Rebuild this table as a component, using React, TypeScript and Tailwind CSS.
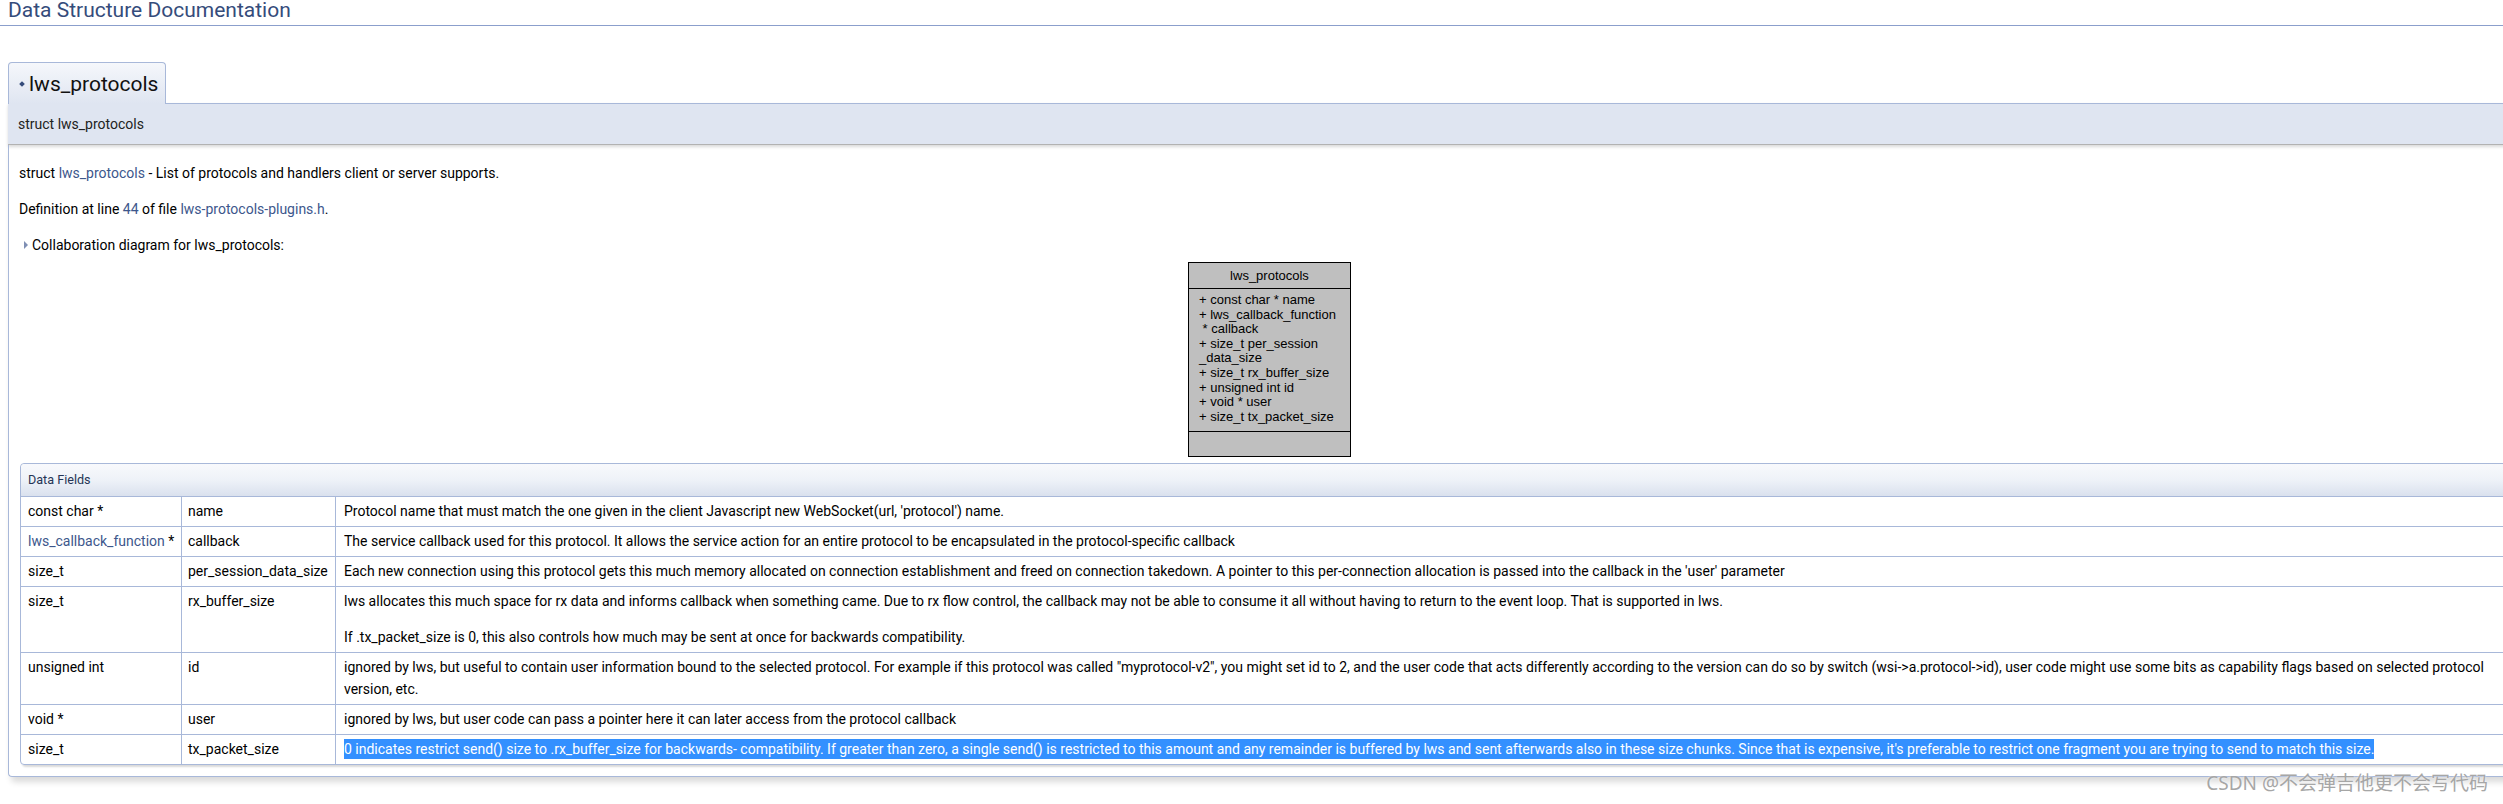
import React from "react";

const LINK = "text-[#3d578c]";

function Row({
  type,
  name,
  children,
}: {
  type: React.ReactNode;
  name: string;
  children: React.ReactNode;
}) {
  return (
    <tr className="align-top">
      <td className="border-t border-r border-[#a8b8d9] pl-[7px] pr-[7px] pt-[3px] pb-[4px] whitespace-nowrap">
        {type}
      </td>
      <td className="border-t border-r border-[#a8b8d9] pl-[6px] pr-[6px] pt-[3px] pb-[4px] whitespace-nowrap">
        {name}
      </td>
      <td className="border-t border-[#a8b8d9] pl-[8px] pr-[8px] pt-[3px] pb-[4px]">
        {children}
      </td>
    </tr>
  );
}

export default function App() {
  const diagramLines = [
    "+ const char * name",
    "+ lws_callback_function",
    " * callback",
    "+ size_t per_session",
    "_data_size",
    "+ size_t rx_buffer_size",
    "+ unsigned int id",
    "+ void * user",
    "+ size_t tx_packet_size",
  ];

  return (
    <div className="relative w-[2503px] h-[804px] overflow-hidden bg-white text-black [font-family:Roboto,'Noto_Sans',sans-serif] text-[14px]">
      {/* Title */}
      <div className="pl-[8px] pb-[4px] text-[21px] leading-[21px] text-[#354c7b] border-b border-[#8b9fcc]">
        Data Structure Documentation
      </div>

      {/* Struct block */}
      <div className="mt-[36px] ml-[8px] w-[2522px]">
        {/* Tab */}
        <div className="relative z-10 -mb-px flex h-[42px] w-[158px] items-center rounded-t-[4px] border border-b-0 border-[#a8b8d9] bg-gradient-to-b from-[#f5f7fb] to-[#dfe5f1] pl-[11px]">
          <div className="h-[4px] w-[4px] rotate-45 bg-[#354c7b]" />
          <span className="ml-[5px] text-[21px] leading-[26px] text-[#111]">lws_protocols</span>
        </div>

        {/* Prototype band */}
        <div className="flex h-[42px] items-center border-t border-b border-t-[#a8b8d9] border-b-[#b3b3b3] bg-[#dfe5f1] pl-[10px] shadow-[0_2px_3px_rgba(0,0,0,0.15)]">
          <span className="leading-[22px] text-[#222]">struct lws_protocols</span>
        </div>

        {/* Doc body */}
        <div className="rounded-bl-[4px] border-l border-b border-[#a8b8d9] pl-[10px] pr-[10px] pt-[17px] pb-[11px] shadow-[3px_5px_6px_rgba(0,0,0,0.15)]">
          <p className="leading-[22px]">
            struct <span className={LINK}>lws_protocols</span> - List of protocols and handlers client or server supports.
          </p>
          <p className="mt-[14px] leading-[22px]">
            Definition at line <span className={LINK}>44</span> of file{" "}
            <span className={LINK}>lws-protocols-plugins.h</span>.
          </p>
          <div className="mt-[14px] flex items-center leading-[22px]">
            <span className="ml-[5px] h-0 w-0 border-y-[4px] border-l-[4px] border-y-transparent border-l-[#7f8fb4]" />
            <span className="ml-[4px]">Collaboration diagram for lws_protocols:</span>
          </div>

          {/* Diagram */}
          <div className="mt-[6px] flex justify-center">
            <div className="flex h-[195px] w-[163px] flex-col border border-black bg-[#bfbfbf] text-[13px] text-black [font-family:'Liberation_Sans',Arial,sans-serif]">
              <div className="flex h-[26px] items-center justify-center border-b border-black">lws_protocols</div>
              <div className="h-[143px] border-b border-black pl-[10px] pt-[4px] leading-[14.6px]">
                {diagramLines.map((l, i) => (
                  <div key={i} className="whitespace-pre">
                    {l}
                  </div>
                ))}
              </div>
              <div className="flex-1" />
            </div>
          </div>

          {/* Data fields table */}
          <table className="mt-[6px] ml-[1px] w-[2499px] table-fixed border-separate border-spacing-0 rounded-[4px] border border-[#a8b8d9] leading-[22px] shadow-[2px_2px_2px_rgba(0,0,0,0.15)]">
            <colgroup>
              <col className="w-[161px]" />
              <col className="w-[154px]" />
              <col />
            </colgroup>
            <thead>
              <tr>
                <th
                  colSpan={3}
                  className="h-[32px] rounded-t-[4px] bg-gradient-to-b from-[#f8f9fc] via-[#eef2f8] to-[#dae1ee] pl-[7px] text-left text-[12.6px] font-normal text-[#253555]"
                >
                  Data Fields
                </th>
              </tr>
            </thead>
            <tbody>
              <Row type="const char *" name="name">
                Protocol name that must match the one given in the client Javascript new WebSocket(url, 'protocol') name.
              </Row>
              <Row
                type={
                  <>
                    <span className={LINK}>lws_callback_function</span> *
                  </>
                }
                name="callback"
              >
                The service callback used for this protocol. It allows the service action for an entire protocol to be encapsulated in the protocol-specific callback
              </Row>
              <Row type="size_t" name="per_session_data_size">
                Each new connection using this protocol gets this much memory allocated on connection establishment and freed on connection takedown. A pointer to this per-connection allocation is passed into the callback in the 'user' parameter
              </Row>
              <Row type="size_t" name="rx_buffer_size">
                <p>
                  lws allocates this much space for rx data and informs callback when something came. Due to rx flow control, the callback may not be able to consume it all without having to return to the event loop. That is supported in lws.
                </p>
                <p className="mt-[14px]">
                  If .tx_packet_size is 0, this also controls how much may be sent at once for backwards compatibility.
                </p>
              </Row>
              <Row type="unsigned int" name="id">
                ignored by lws, but useful to contain user information bound to the selected protocol. For example if this protocol was called "myprotocol-v2", you might set id to 2, and the user code that acts differently according to the version can do so by switch (wsi-&gt;a.protocol-&gt;id), user code might use some bits as capability flags based on selected protocol version, etc.
              </Row>
              <Row type="void *" name="user">
                ignored by lws, but user code can pass a pointer here it can later access from the protocol callback
              </Row>
              <Row type="size_t" name="tx_packet_size">
                <span className="bg-[#3390ff] py-[2px] text-white">
                  0 indicates restrict send() size to .rx_buffer_size for backwards- compatibility. If greater than zero, a single send() is restricted to this amount and any remainder is buffered by lws and sent afterwards also in these size chunks. Since that is expensive, it's preferable to restrict one fragment you are trying to send to match this size.
                </span>
              </Row>
            </tbody>
          </table>
        </div>
      </div>

      {/* Watermark */}
      <div className="absolute right-[15px] top-[771px] text-[19px] leading-[24px] text-[#a6a6a6] [font-family:'Noto_Sans','Noto_Sans_CJK_SC',sans-serif] [text-shadow:0_0_2px_rgba(255,255,255,0.9)]">
        CSDN @不会弹吉他更不会写代码
      </div>
    </div>
  );
}
